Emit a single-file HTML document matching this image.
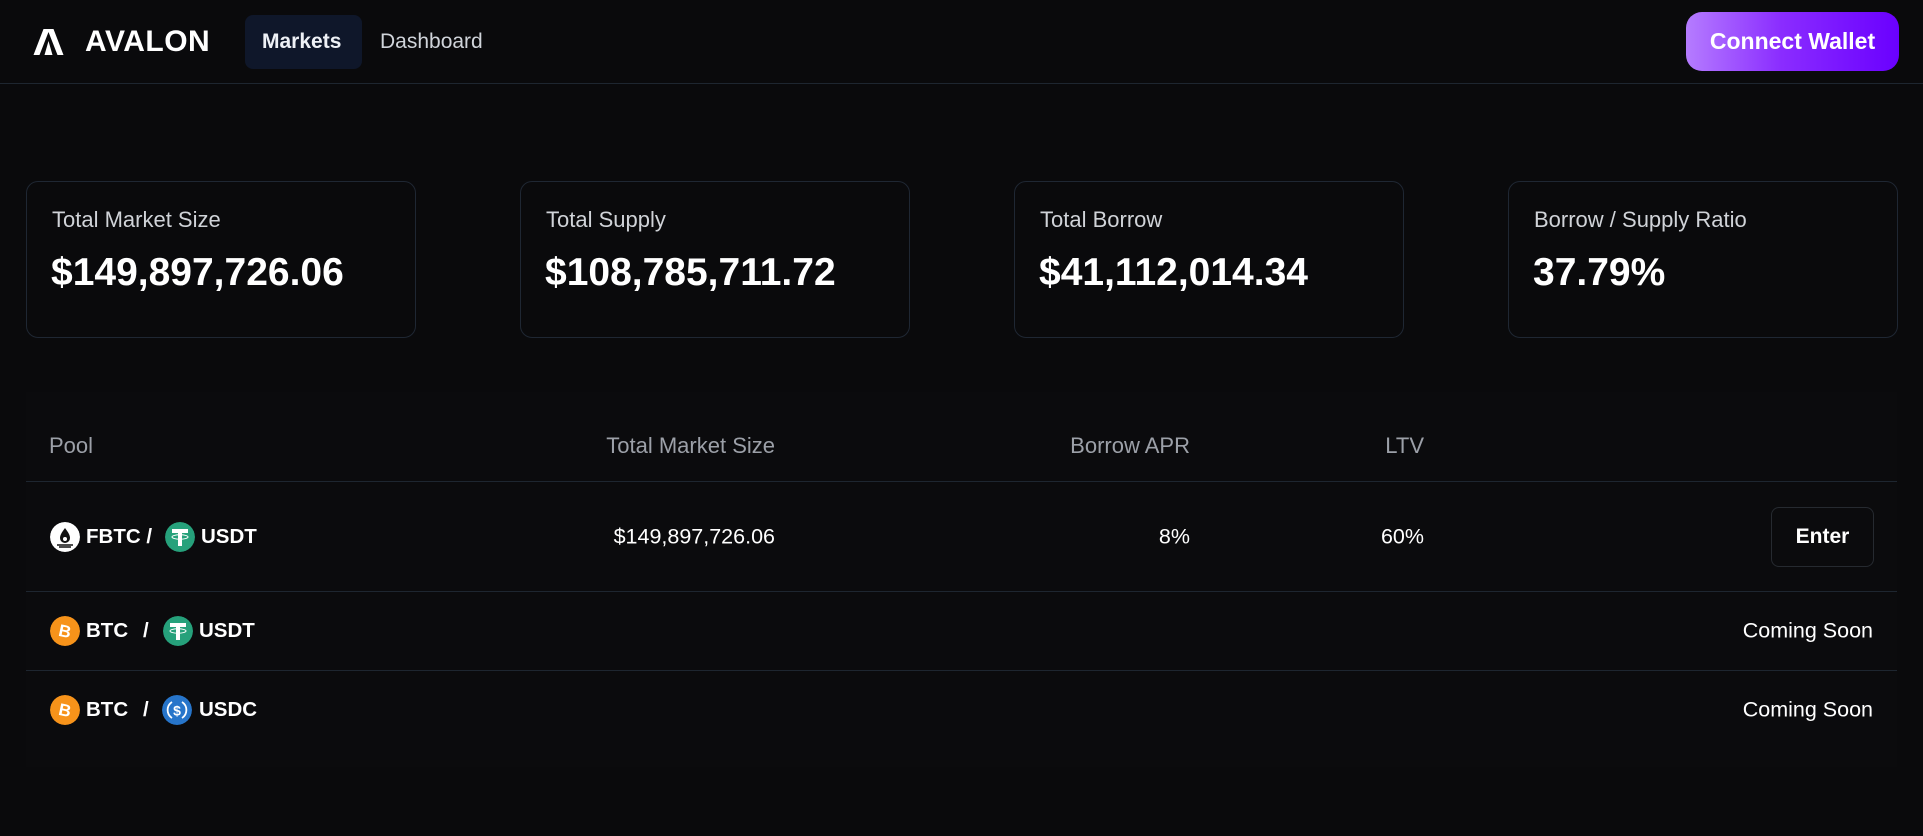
<!DOCTYPE html>
<html><head><meta charset="utf-8"><style>
*{box-sizing:border-box;margin:0;padding:0}
body{width:1923px;height:836px;background:#0a0a0c;font-family:"Liberation Sans",sans-serif;color:#fff;position:relative;overflow:hidden}
.a{position:absolute;white-space:nowrap}
.hdr{position:absolute;left:0;top:0;width:1923px;height:84px;border-bottom:1px solid #1e2630}
.card{position:absolute;top:181px;width:390px;height:157px;border:1px solid #1f2733;border-radius:12px}
.card .l{position:absolute;left:25px;top:25px;font-size:22px;color:#d0d3d8}
.card .v{position:absolute;left:24px;top:69px;font-size:39px;font-weight:bold;letter-spacing:0px}
.th{font-size:22px;color:#9ca0a8;top:433px}
.line{position:absolute;left:26px;width:1871px;height:1px;background:#1e2630}
.td{font-size:21.5px;transform:translateY(-50%)}
.b{font-weight:bold;font-size:20.5px}
.ic{position:absolute;width:30px;height:30px;border-radius:50%;transform:translateY(-50%)}
</style></head><body>
<div class="hdr"></div>
<svg class="a" style="left:33px;top:29px" width="31" height="26" viewBox="0 0 30 26"><path d="M10 0H20L30 26H24L15 3L6 26H0Z" fill="#fff"/><path d="M15 12L19 26H11Z" fill="#fff"/></svg>
<div class="a" style="left:85px;top:25px;font-size:30px;font-weight:bold;letter-spacing:0.5px">AVALON</div>
<div class="a" style="left:245px;top:15px;width:117px;height:54px;background:#0f172a;border-radius:8px"></div>
<div class="a" style="left:262px;top:30px;font-size:21px;font-weight:bold;color:#eef1f6">Markets</div>
<div class="a" style="left:380px;top:30px;font-size:21px;color:#d0d4da">Dashboard</div>
<div class="a" style="left:1686px;top:12px;width:213px;height:59px;border-radius:16px;background:linear-gradient(90deg,#b57cff,#8a2cff 45%,#6a00ff)"></div>
<div class="a" style="left:1686px;top:28px;width:213px;text-align:center;font-size:23px;font-weight:bold">Connect Wallet</div>

<div class="card" style="left:26px"><div class="l">Total Market Size</div><div class="v">$149,897,726.06</div></div>
<div class="card" style="left:520px"><div class="l">Total Supply</div><div class="v">$108,785,711.72</div></div>
<div class="card" style="left:1014px"><div class="l">Total Borrow</div><div class="v">$41,112,014.34</div></div>
<div class="card" style="left:1508px"><div class="l">Borrow / Supply Ratio</div><div class="v">37.79%</div></div>

<div class="a" style="left:26px;top:392px;width:1871px;height:375px;background:#0b0b0d"></div>
<div class="a th" style="left:49px">Pool</div>
<div class="a th" style="right:1148px">Total Market Size</div>
<div class="a th" style="right:733px">Borrow APR</div>
<div class="a th" style="right:499px">LTV</div>
<div class="line" style="top:481px"></div>
<div class="line" style="top:591px"></div>
<div class="line" style="top:670px"></div>

<!-- row1 -->
<svg class="ic" style="left:50px;top:537px" viewBox="0 0 30 30"><circle cx="15" cy="15" r="15" fill="#fff"/><path d="M15 6C12 10 10 13 10 16a5 5 0 0 0 10 0c0-3-2-6-5-10z" fill="#111"/><circle cx="15" cy="17" r="2" fill="#fff"/><path d="M7 23H23M9 25H21" stroke="#111" stroke-width="1.6"/></svg>
<div class="a td b" style="left:86px;top:537px">FBTC /</div>
<svg class="ic" style="left:165px;top:537px" viewBox="0 0 30 30"><circle cx="15" cy="15" r="15" fill="#26a17b"/><path d="M7 7H23V11H17V24H13V11H7Z" fill="#fff"/><ellipse cx="15" cy="15" rx="8" ry="2.2" fill="none" stroke="#fff" stroke-width="1"/></svg>
<div class="a td b" style="left:201px;top:537px">USDT</div>
<div class="a td" style="right:1148px;top:537px">$149,897,726.06</div>
<div class="a td" style="right:733px;top:537px">8%</div>
<div class="a td" style="right:499px;top:537px">60%</div>
<div class="a" style="left:1771px;top:507px;width:103px;height:60px;border:1px solid #262a30;border-radius:8px;text-align:center;line-height:58px;font-size:21px;font-weight:bold">Enter</div>

<!-- row2 -->
<svg class="ic" style="left:50px;top:631px" viewBox="0 0 30 30"><circle cx="15" cy="15" r="15" fill="#f7931a"/><text x="15" y="21" text-anchor="middle" font-size="17" font-weight="bold" fill="#fff" font-family="Liberation Sans" transform="rotate(12 15 15)">B</text></svg>
<div class="a td b" style="left:86px;top:631px">BTC</div>
<div class="a td b" style="left:143px;top:631px">/</div>
<svg class="ic" style="left:163px;top:631px" viewBox="0 0 30 30"><circle cx="15" cy="15" r="15" fill="#26a17b"/><path d="M7 7H23V11H17V24H13V11H7Z" fill="#fff"/><ellipse cx="15" cy="15" rx="8" ry="2.2" fill="none" stroke="#fff" stroke-width="1"/></svg>
<div class="a td b" style="left:199px;top:631px">USDT</div>
<div class="a td" style="right:50px;top:631px">Coming Soon</div>

<!-- row3 -->
<svg class="ic" style="left:50px;top:710px" viewBox="0 0 30 30"><circle cx="15" cy="15" r="15" fill="#f7931a"/><text x="15" y="21" text-anchor="middle" font-size="17" font-weight="bold" fill="#fff" font-family="Liberation Sans" transform="rotate(12 15 15)">B</text></svg>
<div class="a td b" style="left:86px;top:710px">BTC</div>
<div class="a td b" style="left:143px;top:710px">/</div>
<svg class="ic" style="left:162px;top:710px" viewBox="0 0 30 30"><circle cx="15" cy="15" r="15" fill="#2775ca"/><path d="M10 7A9.5 9.5 0 0 0 10 23M20 7A9.5 9.5 0 0 1 20 23" fill="none" stroke="#fff" stroke-width="1.8"/><text x="15" y="20.5" text-anchor="middle" font-size="14" font-weight="bold" fill="#fff" font-family="Liberation Sans">$</text></svg>
<div class="a td b" style="left:199px;top:710px">USDC</div>
<div class="a td" style="right:50px;top:710px">Coming Soon</div>
</body></html>
